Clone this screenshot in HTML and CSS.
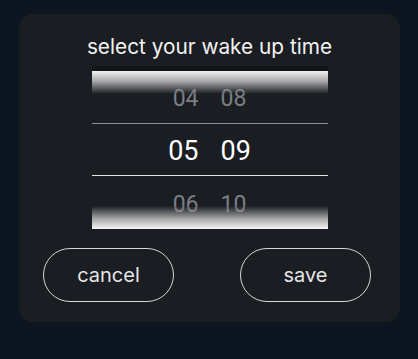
FILE: index.html
```html
<!DOCTYPE html>
<html>
<head>
<meta charset="utf-8">
<link rel="stylesheet" href="styles.css">
</head>
<body>
<div class="card">
  <div class="title">select your wake up time</div>
  <div class="picker">
    <div class="strip"></div>
    <div class="row dim"><span>04</span><span>08</span></div>
    <div class="row active"><span>05</span><span>09</span></div>
    <div class="row dim last"><span>06</span><span>10</span></div>
    <div class="fade fade-top"></div>
    <div class="fade fade-bottom"></div>
  </div>
  <div class="actions">
    <button class="btn">cancel</button>
    <button class="btn">save</button>
  </div>
</div>
</body>
</html>
```

FILE: styles.css
```css
html, body {
  margin: 0;
  padding: 0;
  background: #0d1520;
  width: 418px;
  height: 359px;
  overflow: hidden;
}
body {
  padding-top: 14px;
  padding-left: 19px;
  box-sizing: border-box;
}
.card {
  width: 381px;
  height: 308px;
  background: #1a1d22;
  border-radius: 14px;
  box-sizing: border-box;
  padding-top: 20px;
  display: flex;
  flex-direction: column;
  align-items: center;
}
.title {
  font-family: "Inter", "Liberation Sans", sans-serif;
  font-size: 20.8px;
  line-height: 26px;
  color: #f2f2f2;
}
.picker {
  position: relative;
  margin-top: 6px;
  width: 236px;
  display: flex;
  flex-direction: column;
  font-family: "Roboto", "Liberation Sans", sans-serif;
}
.strip {
  height: 5px;
  background: #121519;
}
.row {
  display: flex;
  justify-content: center;
  align-items: center;
  gap: 22px;
  box-sizing: border-box;
}
.row.dim {
  height: 52px;
  font-size: 23px;
  color: #7b7f85;
  padding-top: 3px;
}
.row.dim.last {
  height: 53px;
}
.row.active {
  height: 53px;
  font-size: 27px;
  color: #ffffff;
  border-top: 1.5px solid #8b8e93;
  border-bottom: 1.5px solid #e4e4e4;
  padding-top: 2px;
}
.fade {
  position: absolute;
  left: 0;
  right: 0;
  height: 23px;
}
.fade-top {
  top: 5px;
  background: linear-gradient(to bottom, #f2f2f2 0%, rgba(200,200,200,0.8) 45%, rgba(26,29,34,0.2) 100%);
}
.fade-bottom {
  bottom: 0;
  background: linear-gradient(to top, #f7f7f7 0%, rgba(200,200,200,0.8) 45%, rgba(26,29,34,0.2) 100%);
}
.actions {
  margin-top: 19px;
  width: 100%;
  box-sizing: border-box;
  padding: 0 29px 0 24px;
  display: flex;
  justify-content: space-between;
}
.btn {
  width: 131px;
  height: 54px;
  border: 1.5px solid #d6d6d6;
  border-radius: 27px;
  background: transparent;
  color: #e6e6e6;
  font-family: "Inter", "Liberation Sans", sans-serif;
  font-size: 20px;
  padding: 0;
  padding-bottom: 1px;
}
```
